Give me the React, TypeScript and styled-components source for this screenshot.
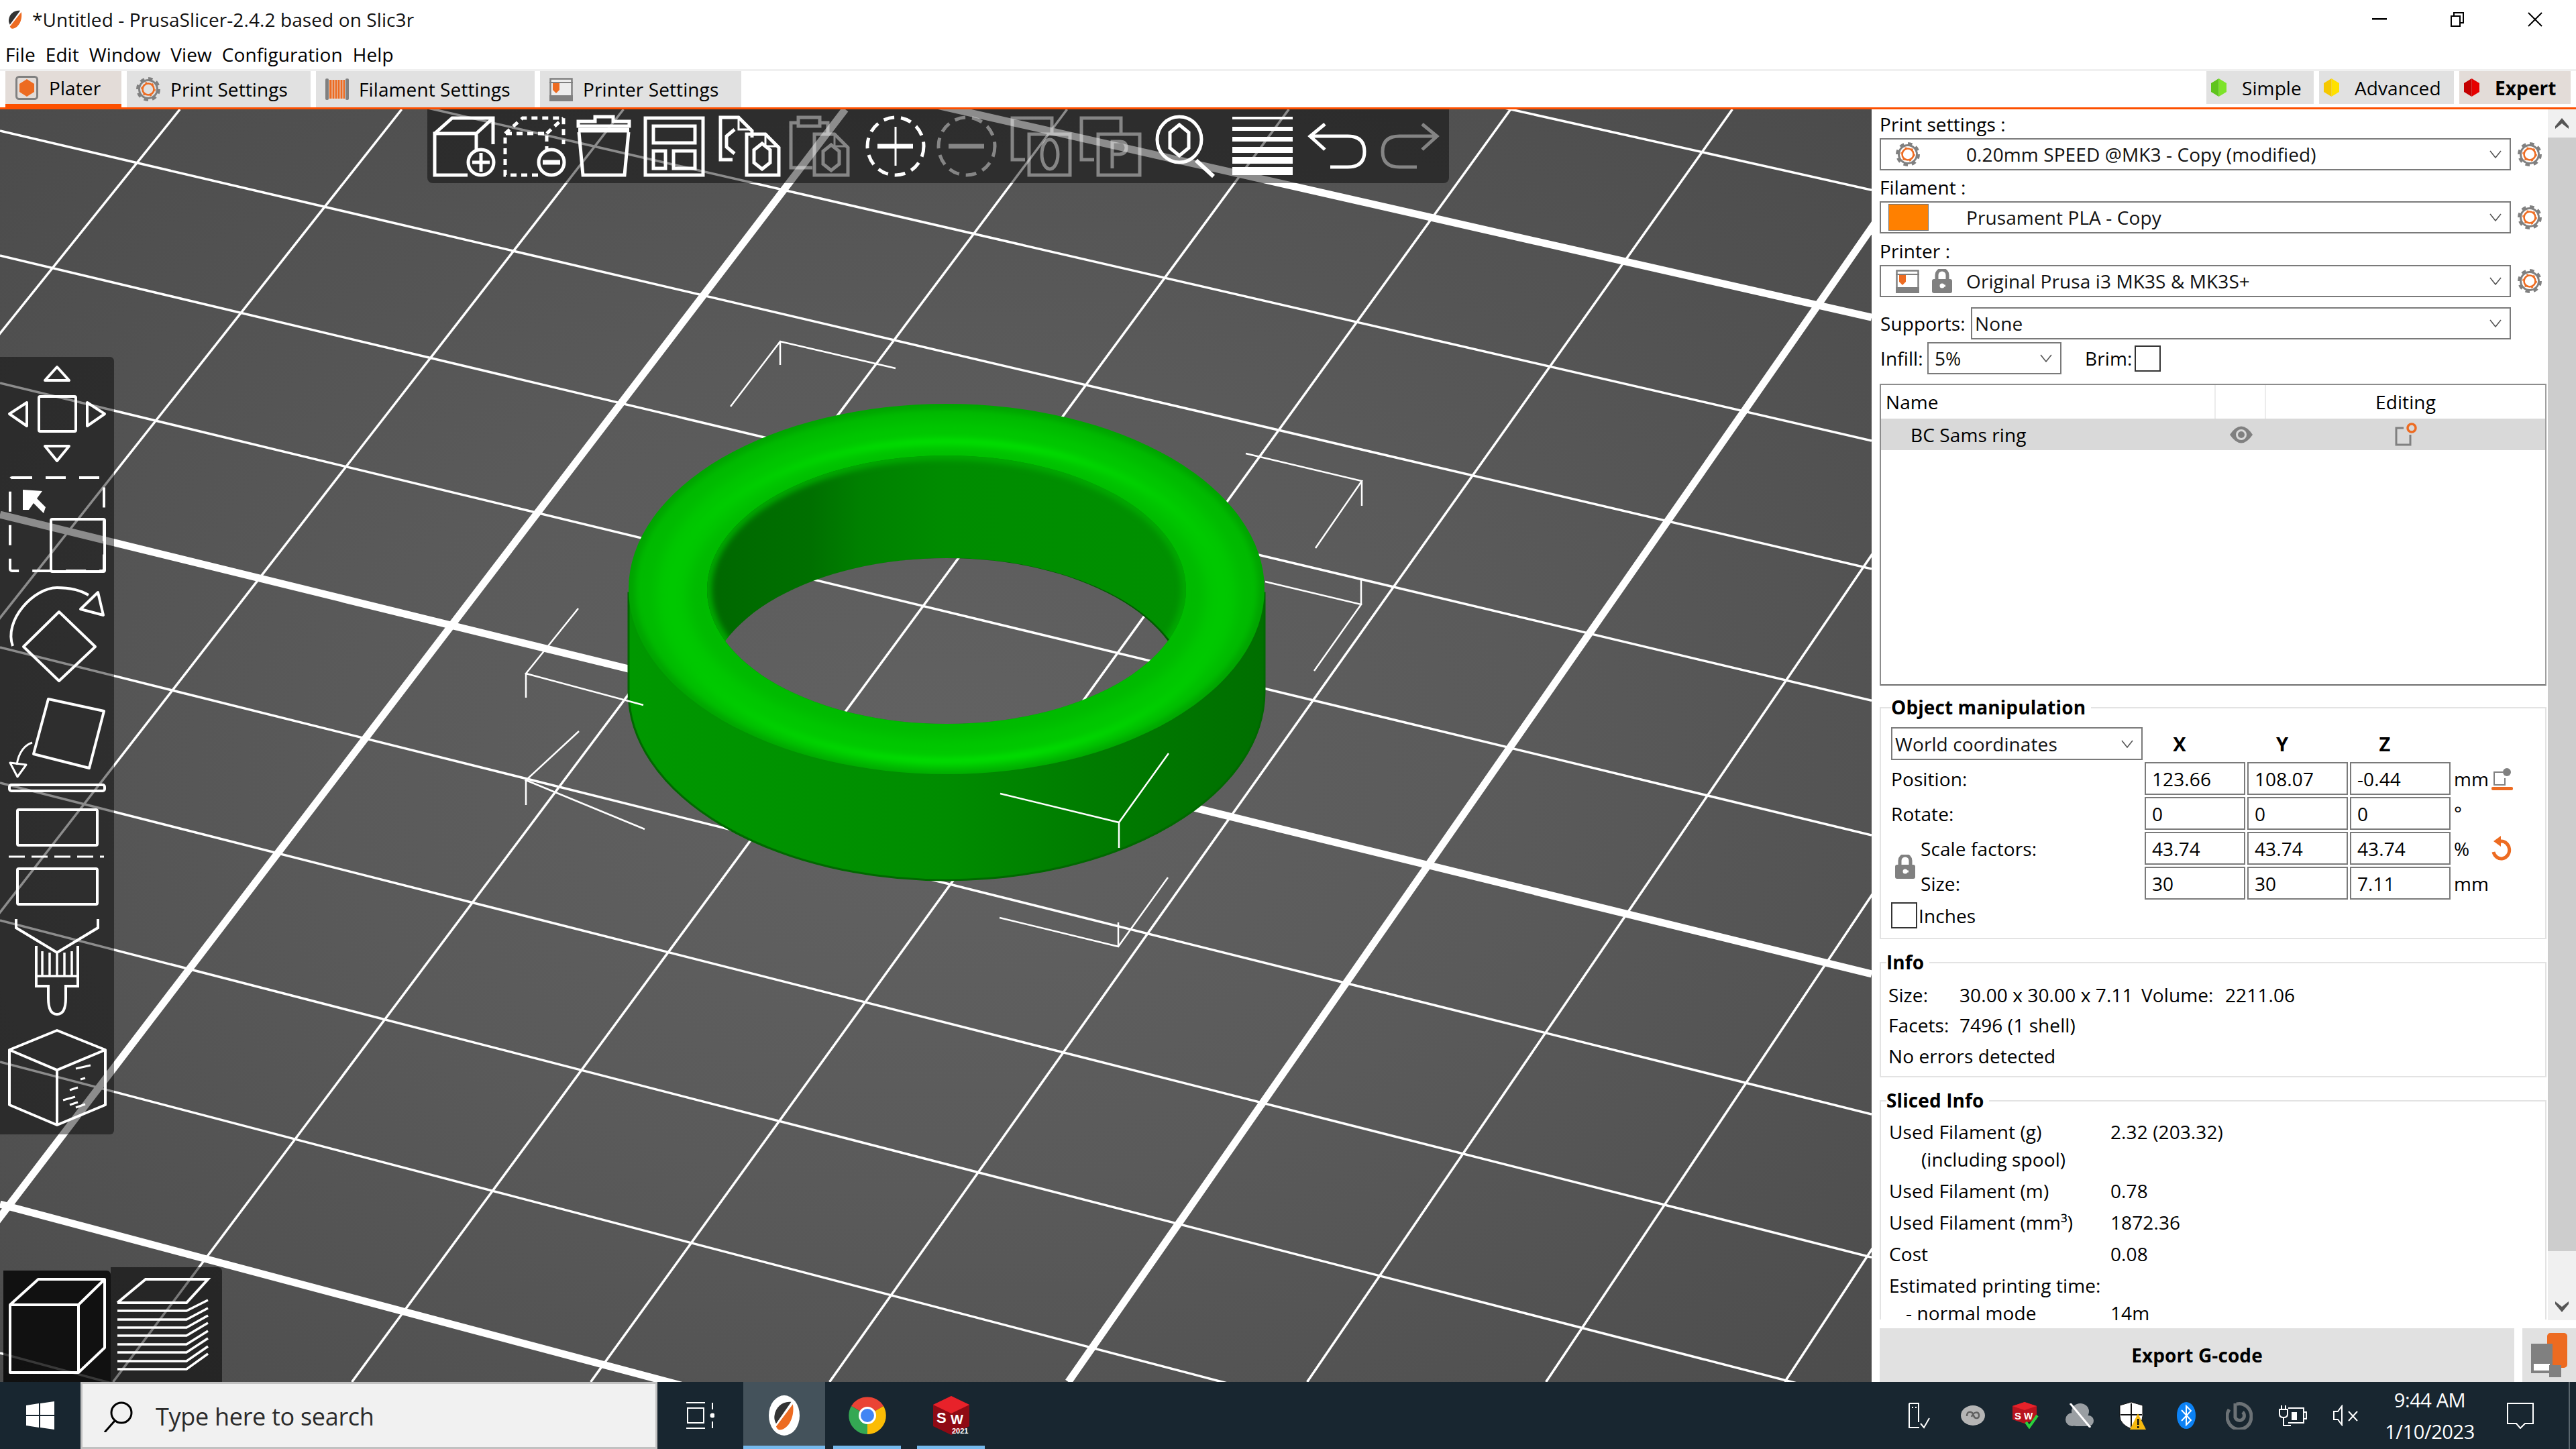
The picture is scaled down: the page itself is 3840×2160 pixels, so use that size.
import React, { FC, ReactNode } from "react";
import styled, { createGlobalStyle } from "styled-components";

const ORANGE = "#ed6b21";
const GRAY = "#808080";
const FONT = `"Open Sans", "Noto Sans", sans-serif`;

const GlobalStyle = createGlobalStyle`
  html, body {
    margin: 0;
    padding: 0;
    width: 3840px;
    height: 2160px;
    overflow: hidden;
    background: #fff;
    font-family: ${FONT};
    color: #000;
  }
  * { box-sizing: border-box; }
`;

const Page = styled.div`
  width: 3840px;
  height: 2160px;
  display: flex;
  flex-direction: column;
  font-size: 28px;
  letter-spacing: 0.1px;
`;

/* ---------- window title, menu ---------- */

const TitleBar = styled.div`
  height: 58px;
  display: flex;
  align-items: center;
  padding: 0 3px 0 12px;
`;

const TitleText = styled.div`
  flex: 1;
  margin-left: 14px;
  color: #111;
`;

const WinButton = styled.div`
  width: 116px;
  height: 58px;
  display: flex;
  align-items: center;
  justify-content: center;
`;

const MenuBar = styled.div`
  height: 45px;
  display: flex;
  align-items: center;
  gap: 15px;
  padding-left: 8px;
`;

const TabBar = styled.div`
  height: 60px;
  flex: none;
  border-top: 3px solid #f0f0f0;
  border-bottom: 3px solid #fd5000;
  display: flex;
  align-items: flex-start;
  padding: 0 8px;
  gap: 8px;
`;

const Tab = styled.div<{ $w: number; $active?: boolean }>`
  width: ${({ $w }) => $w}px;
  height: 54px;
  padding-left: ${({ $active }) => ($active ? 15 : 14)}px;
  display: flex;
  align-items: center;
  gap: ${({ $active }) => ($active ? 16 : 15)}px;
  background: ${({ $active }) => ($active ? "#e3dcd8" : "#e1e1e1")};
  border-bottom: ${({ $active }) => ($active ? "5px solid #fd5000" : "none")};
`;

const ModeTabs = styled.div`
  margin-left: auto;
  display: flex;
  gap: 8px;
`;

const ModeTab = styled.div<{ $w: number; $active?: boolean }>`
  width: ${({ $w }) => $w}px;
  height: 49px;
  padding-left: 7px;
  display: flex;
  align-items: center;
  gap: 23px;
  background: ${({ $active }) => ($active ? "#e3dcd8" : "#e1e1e1")};
  font-weight: ${({ $active }) => ($active ? 700 : 400)};
`;

/* ---------- main area ---------- */

const Main = styled.div`
  flex: 1;
  display: flex;
  min-height: 0;
`;

const Viewport = styled.div`
  position: relative;
  width: 2790px;
  height: 1897px;
  overflow: hidden;
  background: radial-gradient(ellipse at 50% 52%, #626262 0%, #5a5a5a 45%, #4b4b4b 100%);
`;

const Scene = styled.svg`
  position: absolute;
  left: 0;
  top: 0;
  width: 2790px;
  height: 1897px;
`;

const TopToolbar = styled.div`
  position: absolute;
  left: 637px;
  top: 0;
  width: 1523px;
  height: 110px;
  padding: 10px 0 0 8px;
  background: rgba(0, 0, 0, 0.45);
  border-radius: 0 0 8px 8px;
  display: grid;
  grid-template-columns: 104.5px 110.5px 98.5px 112.5px 104.5px 113.5px 105.5px 111.5px 102.5px 114.5px 113.5px 112.5px 104.5px 92px;
`;

const ToolSvg = styled.svg<{ $off?: boolean }>`
  width: 92px;
  height: 90px;
  overflow: visible;
  fill: none;
  stroke: #fff;
  stroke-width: 5px;
  opacity: ${({ $off }) => ($off ? 0.42 : 1)};
`;

const LeftToolbar = styled.div`
  position: absolute;
  left: 0;
  top: 369px;
  width: 170px;
  height: 1159px;
  padding-top: 13px;
  background: rgba(0, 0, 0, 0.45);
  border-radius: 0 6px 6px 0;
  display: flex;
  flex-direction: column;
  gap: 24px;
`;

const GizmoSvg = styled.svg`
  width: 170px;
  height: 141px;
  flex: none;
  overflow: visible;
  fill: none;
  stroke: #fff;
  stroke-width: 4px;
`;

const ViewToolbar = styled.div`
  position: absolute;
  left: 5px;
  bottom: 0;
  display: flex;
  align-items: flex-end;
`;

const ViewButton = styled.div<{ $active?: boolean }>`
  width: ${({ $active }) => ($active ? 160 : 166)}px;
  height: ${({ $active }) => ($active ? 166 : 171)}px;
  background: ${({ $active }) => ($active ? "rgba(0,0,0,0.78)" : "rgba(0,0,0,0.52)")};
  border-radius: 0 6px 0 0;
`;

const ViewSvg = styled.svg`
  width: 100%;
  height: 100%;
  fill: none;
  stroke: #fff;
  stroke-width: 4px;
`;

/* ---------- sidebar ---------- */

const Sidebar = styled.div`
  width: 1050px;
  height: 1897px;
  display: flex;
  flex-direction: column;
  background: #fff;
`;

const SideScroll = styled.div`
  height: 1805px;
  display: flex;
`;

const SideContent = styled.div`
  width: 1008px;
  height: 1805px;
  padding-left: 12px;
  padding-right: 2px;
  overflow: hidden;
`;

const ScrollBar = styled.div`
  width: 42px;
  display: flex;
  flex-direction: column;
  background: #f0f0f0;
`;

const ScrollArrow = styled.div`
  height: 42px;
  display: flex;
  align-items: center;
  justify-content: center;
`;

const ScrollEnd = styled.div`
  flex: 1;
  display: flex;
  align-items: flex-end;
  justify-content: center;
  padding-bottom: 12px;
`;

const ScrollThumb = styled.div`
  height: 1660px;
  background: #cdcdcd;
`;

const PresetLabel = styled.div<{ $h: number }>`
  height: ${({ $h }) => $h}px;
  display: flex;
  align-items: flex-end;
  line-height: 42px;
`;

const PresetRow = styled.div`
  display: flex;
  align-items: center;
  gap: 10px;
`;

const Combo = styled.div<{ $w?: number; $h?: number }>`
  width: ${({ $w }) => ($w ? `${$w}px` : "941px")};
  height: ${({ $h }) => $h ?? 48}px;
  flex: none;
  border: 2px solid #7a7a7a;
  display: flex;
  align-items: center;
  background: #fff;
  color: #111;
`;

const ComboIcons = styled.div<{ $flush?: boolean }>`
  width: 127px;
  flex: none;
  padding-left: ${({ $flush }) => ($flush ? 0 : 22)}px;
  display: flex;
  align-items: center;
  gap: 19px;
`;

const ComboText = styled.div`
  flex: 1;
  white-space: nowrap;
`;

const ComboPlain = styled(ComboText)<{ $pad?: number }>`
  padding-left: ${({ $pad }) => $pad ?? 4}px;
`;

const Chevron = styled.svg`
  width: 18px;
  height: 12px;
  margin-right: 12px;
  flex: none;
  fill: none;
  stroke: #555;
  stroke-width: 1.6px;
`;

const Swatch = styled.div`
  width: 60px;
  height: 40px;
  margin-left: 11px;
  background: #ff8000;
  border: 1px solid #777;
`;

const OptionRow = styled.div<{ $top: number }>`
  margin-top: ${({ $top }) => $top}px;
  display: flex;
  align-items: center;
  gap: 8px;
  padding-left: 1px;
`;

const OptionLabel = styled.div<{ $w: number }>`
  width: ${({ $w }) => $w}px;
  flex: none;
  white-space: nowrap;
`;

const CheckBox = styled.div`
  width: 39px;
  height: 39px;
  flex: none;
  border: 2px solid #333;
  background: #fff;
`;

const BrimLabel = styled(OptionLabel)`
  margin-left: 27px;
`;

const Table = styled.div`
  margin-top: 14px;
  height: 450px;
  border: 2px solid #8c8c8c;
  border-right-color: #a0a0a0;
  border-bottom-color: #6f6f6f;
`;

const TableHead = styled.div`
  height: 50px;
  display: grid;
  grid-template-columns: 499px 75px 1fr;
  align-items: center;
`;

const HeadCell = styled.div<{ $center?: boolean }>`
  height: 100%;
  display: flex;
  align-items: center;
  justify-content: ${({ $center }) => ($center ? "center" : "flex-start")};
  padding-left: ${({ $center }) => ($center ? 0 : 7)}px;
  border-right: 2px solid #ececec;
  &:last-child { border-right: none; }
`;

const TableRow = styled.div`
  height: 47px;
  background: #d9d9d9;
  display: grid;
  grid-template-columns: 499px 75px 1fr;
  align-items: center;
`;

const RowName = styled.div`
  padding-left: 44px;
`;

const RowIcon = styled.div`
  display: flex;
  justify-content: center;
`;

const Group = styled.div<{ $top: number; $h?: number; $pad: number }>`
  position: relative;
  margin-top: ${({ $top }) => $top}px;
  height: ${({ $h }) => ($h ? `${$h}px` : "auto")};
  border: 2px solid #e3e3e3;
  border-bottom-width: ${({ $h }) => ($h ? 2 : 0)}px;
  padding-top: ${({ $pad }) => $pad}px;
`;

const GroupTitle = styled.div<{ $left: number }>`
  position: absolute;
  top: -20px;
  left: ${({ $left }) => $left}px;
  padding: 0 8px 0 0;
  background: #fff;
  font-weight: 700;
  line-height: 36px;
`;

const ManipGrid = styled.div`
  display: grid;
  padding-left: 15px;
  grid-template-columns: 41px 331px 150px 150px 150px 130px;
  grid-auto-rows: 49px;
  gap: 3px;
  align-items: center;
`;

const ManipCombo = styled(Combo)`
  grid-column: 1 / span 2;
  width: 375px;
  height: 49px;
`;

const AxisHead = styled.div`
  font-weight: 700;
  font-size: 29px;
  text-align: center;
  padding-right: 46px;
`;

const ManipLabel = styled.div<{ $sub?: boolean }>`
  grid-column: ${({ $sub }) => ($sub ? "2" : "1 / span 2")};
`;

const LockCell = styled.div`
  grid-column: 1;
  grid-row: span 2;
  display: flex;
  justify-content: center;
  padding-top: 2px;
`;

const Field = styled.div`
  height: 49px;
  border: 2px solid #7a7a7a;
  padding-left: 9px;
  display: flex;
  align-items: center;
  background: #fff;
`;

const UnitCell = styled.div`
  display: flex;
  align-items: center;
  gap: 2px;
  padding-left: 2px;
`;

const UnitText = styled.div<{ $raised?: boolean }>`
  width: 54px;
  align-self: ${({ $raised }) => ($raised ? "flex-start" : "center")};
  margin-top: ${({ $raised }) => ($raised ? -2 : 0)}px;
`;

const InchesRow = styled.div`
  margin-top: 4px;
  padding-left: 15px;
  display: flex;
  align-items: center;
  gap: 2px;
`;

const InfoLine = styled.div`
  height: 46.5px;
  padding-left: 11px;
  display: flex;
  align-items: center;
  margin-top: -0.7px;
`;

const InfoCell = styled.div<{ $w: number }>`
  width: ${({ $w }) => $w}px;
  flex: none;
  white-space: nowrap;
`;

const SlicedRow = styled.div<{ $tight?: boolean; $last?: boolean }>`
  display: grid;
  grid-template-columns: 330px 1fr;
  padding-left: 12px;
  line-height: ${({ $last }) => ($last ? 20 : 41)}px;
  margin-top: ${({ $tight, $last }) => ($last ? 10 : $tight ? 0 : 6)}px;
`;

const Indented = styled.div<{ $pad: number }>`
  padding-left: ${({ $pad }) => $pad}px;
`;

const ExportRow = styled.div`
  margin-top: 12px;
  height: 80px;
  display: flex;
  padding-left: 12px;
  gap: 12px;
`;

const ExportButton = styled.div`
  width: 946px;
  background: #e1e1e1;
  display: flex;
  align-items: center;
  justify-content: center;
  font-weight: 700;
`;

const RemoveButton = styled.div`
  flex: 1;
  background: #e1e1e1;
  display: flex;
  align-items: center;
  justify-content: center;
`;

/* ---------- taskbar ---------- */

const TaskBar = styled.div`
  height: 100px;
  flex: none;
  display: flex;
  align-items: stretch;
  background: #182630;
  letter-spacing: 0;
`;

const StartButton = styled.div`
  width: 120px;
  display: flex;
  align-items: center;
  justify-content: center;
`;

const SearchBox = styled.div`
  width: 860px;
  border: solid #c1c1c1;
  border-width: 3px;
  background: #f1f1f1;
  padding: 3px 0 0 30px;
  display: flex;
  align-items: center;
  gap: 33px;
  color: #2b2b2b;
  font-size: 36px;
  letter-spacing: -0.3px;
`;

const TaskCell = styled.div<{ $w: number; $active?: boolean; $line?: boolean }>`
  position: relative;
  width: ${({ $w }) => $w}px;
  display: flex;
  align-items: center;
  justify-content: center;
  background: ${({ $active }) => ($active ? "#44525b" : "transparent")};
  &::after {
    content: "";
    display: ${({ $line }) => ($line ? "block" : "none")};
    position: absolute;
    bottom: 0;
    left: ${({ $active }) => ($active ? 0 : 12)}px;
    right: ${({ $active }) => ($active ? 0 : 12)}px;
    height: 5px;
    background: #76b9ed;
  }
`;

const Tray = styled.div`
  margin-left: auto;
  display: flex;
  align-items: stretch;
`;

const TrayCell = styled.div`
  width: 79.5px;
  display: flex;
  align-items: center;
  justify-content: center;
`;

const Clock = styled.div`
  width: 170px;
  color: #fff;
  font-size: 29px;
  letter-spacing: -0.4px;
  display: flex;
  flex-direction: column;
  align-items: center;
  justify-content: center;
  gap: 11px;
  line-height: 36px;
`;

const NotifyCell = styled.div`
  width: 100px;
  display: flex;
  align-items: center;
  justify-content: center;
`;

const ShowDesktop = styled.div`
  width: 33px;
  border-right: 9px solid transparent;
  position: relative;
  &::after {
    content: "";
    position: absolute;
    right: 0;
    top: 0;
    bottom: 0;
    width: 2px;
    background: #5a666d;
  }
`;

/* ---------- small drawings ---------- */

const Gear: FC<{ size?: number }> = ({ size = 36 }) => (
  <svg width={size} height={size} viewBox="0 0 36 36" fill="none" style={{ flex: "none" }}>
    <circle cx="18" cy="18" r="16" stroke={GRAY} strokeWidth="4" strokeDasharray="6.5 6" />
    <circle cx="18" cy="18" r="13.5" stroke={GRAY} strokeWidth="3" />
    <circle cx="18" cy="18" r="8.5" stroke={ORANGE} strokeWidth="2.6" />
    <circle cx="18" cy="18" r="10.2" stroke={ORANGE} strokeWidth="1.4" strokeDasharray="3 7.7" />
  </svg>
);

const Down: FC = () => (
  <Chevron viewBox="0 0 18 12">
    <polyline points="1,1 9,11 17,1" />
  </Chevron>
);

const Hex: FC<{ light: string; dark: string }> = ({ light, dark }) => (
  <svg width="23" height="27" viewBox="0 0 23 27" style={{ flex: "none" }}>
    <polygon points="11.5,0 23,7 23,20 11.5,27" fill={light} />
    <polygon points="11.5,0 0,7 0,20 11.5,27" fill={dark} />
  </svg>
);

const PlaterIcon: FC = () => (
  <svg width="34" height="36" viewBox="0 0 34 36" fill="none" style={{ flex: "none" }}>
    <rect x="1.5" y="1.5" width="31" height="33" rx="4" stroke={GRAY} strokeWidth="3" />
    <polygon points="17,5 28,12 28,24 17,31 6,24 6,12" fill={ORANGE} />
  </svg>
);

const SpoolIcon: FC = () => (
  <svg width="35" height="36" viewBox="0 0 35 36" fill="none" style={{ flex: "none" }}>
    <rect x="0" y="2" width="5" height="32" rx="2" fill={GRAY} />
    <rect x="30" y="2" width="5" height="32" rx="2" fill={GRAY} />
    <rect x="6" y="4" width="23" height="28" fill={ORANGE} />
    {[10, 14, 18, 22, 26].map((x) => (
      <line key={x} x1={x} y1="4" x2={x} y2="32" stroke="#e1e1e1" strokeWidth="1" />
    ))}
  </svg>
);

const PrinterIcon: FC = () => (
  <svg width="35" height="35" viewBox="0 0 35 35" fill="none" style={{ flex: "none" }}>
    <rect x="1.5" y="1.5" width="32" height="32" stroke={GRAY} strokeWidth="2.5" fill="#fff" fillOpacity="0.4" />
    <rect x="0" y="26" width="35" height="9" fill={GRAY} />
    <line x1="0" y1="7" x2="35" y2="7" stroke={GRAY} strokeWidth="2" />
    <polygon points="5,8 15,8 15,18 10,23 5,18" fill={ORANGE} />
  </svg>
);

const Lock: FC = () => (
  <svg width="30" height="36" viewBox="0 0 30 36" fill="none" style={{ flex: "none" }}>
    <path d="M7 17V9a8 8 0 0 1 16 0v8" stroke={GRAY} strokeWidth="5" />
    <rect x="0" y="15" width="30" height="21" rx="3" fill={GRAY} />
    <circle cx="15" cy="25" r="3.5" fill="#fff" />
    <rect x="15" y="23.5" width="5" height="3" fill="#fff" />
  </svg>
);

const PrusaMark: FC<{ w: number; h: number; ring?: boolean }> = ({ w, h, ring }) => (
  <svg width={w} height={h} viewBox="0 0 40 52" style={{ flex: "none" }}>
    {ring && <ellipse cx="20" cy="26" rx="20" ry="26" fill="#fff" />}
    <g transform={ring ? "translate(6 7) scale(.7 .74)" : undefined}>
      <path d="M33 2 C18 0 4 10 2 26 C1 32 3 36 5 40 Z" fill="#333" />
      <path d="M36 6 C40 28 28 50 12 51 C8 51 6 47 5 45 Z" fill={ORANGE} />
    </g>
  </svg>
);

/* ---------- top toolbar icons ---------- */

const HexMark: FC<{ cx: number; cy: number; rx: number; ry: number }> = ({ cx, cy, rx, ry }) => (
  <polygon
    points={`${cx},${cy - ry} ${cx + rx},${cy - ry / 2} ${cx + rx},${cy + ry / 2} ${cx},${cy + ry} ${cx - rx},${cy + ry / 2} ${cx - rx},${cy - ry / 2}`}
  />
);

const topIcons: { off?: boolean; node: ReactNode }[] = [
  {
    node: (
      <>
        <path d="M52 88H3V26H65V50M3 26L29 3H90V42M65 26L90 3" />
        <circle cx="72" cy="69" r="19" />
        <path d="M72 55V83M59 69H85" />
      </>
    ),
  },
  {
    node: (
      <>
        <path d="M52 88H3V26H65V50M3 26L29 3H90V42M65 26L90 3" strokeDasharray="9 7" />
        <circle cx="72" cy="69" r="19" />
        <path d="M59 69H85" strokeWidth="7" />
      </>
    ),
  },
  {
    node: (
      <>
        <path d="M2 8H27V1H54V8H78V15H2Z" />
        <path d="M2 21H78" strokeWidth="7" />
        <path d="M3 24L9 88H71L77 24" />
      </>
    ),
  },
  {
    node: (
      <>
        <rect x="3" y="3" width="86" height="85" />
        <rect x="15" y="15" width="62" height="25" strokeWidth="5" />
        <rect x="15" y="52" width="18" height="26" />
        <rect x="45" y="52" width="32" height="26" />
      </>
    ),
  },
  {
    node: (
      <>
        <path d="M21 65H3V2H30L50 22V32" />
        <path d="M30 2V20H50" strokeWidth="3" />
        <path d="M24 20L12 30V46L24 56" />
        <path d="M42 88V27H70L90 47V88Z" />
        <path d="M70 27V45H90" strokeWidth="3" />
        <HexMark cx={65} cy={60} rx={12} ry={19} />
      </>
    ),
  },
  {
    off: true,
    node: (
      <>
        <path d="M35 77H3V10H14M46 10H58V25" />
        <rect x="14" y="2" width="32" height="13" />
        <path d="M38 88V27H68L88 47V88Z" />
        <path d="M68 27V45H88" strokeWidth="3" />
        <HexMark cx={63} cy={62} rx={12} ry={19} />
      </>
    ),
  },
  {
    node: (
      <>
        <ellipse cx="46" cy="45" rx="42" ry="43" strokeDasharray="16 10" />
        <path d="M46 16V74" strokeWidth="3" />
        <path d="M19 45H72" strokeWidth="7" />
      </>
    ),
  },
  {
    off: true,
    node: (
      <>
        <ellipse cx="46" cy="45" rx="42" ry="43" strokeDasharray="16 10" />
        <path d="M19 45H72" strokeWidth="7" />
      </>
    ),
  },
  {
    off: true,
    node: (
      <>
        <path d="M22 65H3V3H62V25" />
        <rect x="28" y="27" width="61" height="61" />
        <ellipse cx="59" cy="57" rx="12" ry="22" />
      </>
    ),
  },
  {
    off: true,
    node: (
      <>
        <path d="M22 65H3V3H62V25" />
        <rect x="28" y="27" width="62" height="61" />
        <path d="M49 78V38H60Q70 38 70 47T60 57H49" />
      </>
    ),
  },
  {
    node: (
      <>
        <ellipse cx="35" cy="35" rx="33" ry="34" />
        <HexMark cx={35} cy={36} rx={14} ry={23} />
        <path d="M60 66L86 90" strokeWidth="6" />
      </>
    ),
  },
  {
    node: (
      <g stroke="none" fill="#fff">
        <rect x="0" y="1" width="90" height="4" />
        <rect x="0" y="16" width="90" height="6" />
        <rect x="0" y="31" width="90" height="7" />
        <rect x="0" y="46" width="90" height="9" />
        <rect x="0" y="61" width="90" height="10" />
        <rect x="0" y="76" width="90" height="12" />
      </g>
    ),
  },
  {
    node: <path d="M26 12L4 30L26 50M4 30H60Q85 30 85 53T60 76H34" />,
  },
  {
    off: true,
    node: <path d="M66 12L88 30L66 50M88 30H32Q7 30 7 53T32 76H58" />,
  },
];

/* ---------- left toolbar icons ---------- */

const gizmos: ReactNode[] = [
  <>
    <polygon points="85,2 103,22 67,22" strokeLinejoin="round" />
    <polygon points="14,72 40,55 40,90" strokeLinejoin="round" />
    <rect x="58" y="46" width="55" height="52" rx="2" />
    <polygon points="156,72 130,55 130,90" strokeLinejoin="round" />
    <polygon points="85,142 103,120 67,120" strokeLinejoin="round" />
  </>,
  <>
    <rect x="15" y="2" width="140" height="139" rx="3" strokeDasharray="30 20" />
    <polygon points="34,20 63,22 55,33 68,46 65,55 50,40 43,50 34,50" fill="#fff" stroke="none" />
    <rect x="76" y="64" width="80" height="78" rx="2" />
  </>,
  <>
    <path d="M19 88C5 50 50 1 85 1C105 1 120 5 132 12" />
    <polygon points="120,33 146,8 154,42" strokeLinejoin="round" />
    <polygon points="35,89 88,37 142,89 88,140" strokeLinejoin="round" />
  </>,
  <>
    <polygon points="72,2 155,20 133,105 50,84" strokeLinejoin="round" />
    <path d="M48 67C38 70 28 80 25 100" strokeWidth="3" />
    <polygon points="15,97 39,100 26,118" strokeLinejoin="round" strokeWidth="3" />
    <rect x="14" y="130" width="142" height="9" rx="3" />
  </>,
  <>
    <rect x="26" y="2" width="119" height="53" rx="2" />
    <path d="M13 72H155" strokeDasharray="24 10" strokeWidth="3" />
    <rect x="26" y="90" width="119" height="53" rx="2" />
  </>,
  <>
    <path d="M24 0V13L85 50L146 13V0" />
    <path d="M54 40V100H72V118Q72 142 85 142Q98 142 98 118V100H116V40" />
    <path d="M54 85H116M63 48V85M74 50V85M85 50V85M96 50V85M107 48V85" strokeWidth="3.5" />
  </>,
  <>
    <path d="M14 30L85 1L157 30V112L85 142L14 112Z" strokeLinejoin="round" />
    <path d="M14 30L85 60L157 30M85 60V142" />
    <path d="M113 58L135 53M120 74L127 72M104 90L116 86M94 105L112 100M104 112L116 108M113 116L127 111" strokeWidth="3" />
  </>,
];

/* ---------- 3D scene ---------- */

const family1 = Array.from({ length: 13 }, (_, i) => {
  const k = i - 3;
  const t = 1260 + 330.6 * k;
  const m = -0.763 + (t - 1260) * 0.0000405;
  return { key: k, t, m, thick: k % 5 === 0 };
});

const family2 = [
  { y0: -340, thick: false },
  { y0: -160, thick: true },
  { y0: 14, thick: false },
  { y0: 195, thick: false },
  { y0: 381, thick: false },
  { y0: 571, thick: false },
  { y0: 767, thick: true },
  { y0: 965, thick: false },
  { y0: 1167, thick: false },
  { y0: 1372, thick: false },
  { y0: 1583, thick: false },
  { y0: 1795, thick: true },
  { y0: 2017, thick: false },
];

const bedMarks = [
  "M1335 549L1163 509L1089 606M1163 509V544",
  "M1857 676L2030 717L1961 817M2030 717V754",
  "M1886 867L2029 901L1959 1000M2029 901V865",
  "M862 907L784 1004L959 1051M784 1004V1040",
  "M863 1090L784 1163L961 1236M784 1163V1200",
  "M1491 1183L1668 1226L1742 1123M1668 1226V1264",
  "M1490 1368L1667 1411L1741 1308M1667 1411V1375",
];

const SceneView: FC = () => (
  <Scene viewBox="0 163 2790 1897">
    <defs>
      <linearGradient id="sideShade" x1="937" x2="1885" y1="0" y2="0" gradientUnits="userSpaceOnUse">
        <stop offset="0" stopColor="#009800" />
        <stop offset="0.5" stopColor="#008c00" />
        <stop offset="0.72" stopColor="#007c00" />
        <stop offset="1" stopColor="#006f00" />
      </linearGradient>
      <linearGradient id="wallShade" x1="1053" x2="1766" y1="0" y2="0" gradientUnits="userSpaceOnUse">
        <stop offset="0" stopColor="#006800" />
        <stop offset="0.22" stopColor="#007000" />
        <stop offset="0.32" stopColor="#008000" />
        <stop offset="0.5" stopColor="#008c00" />
        <stop offset="1" stopColor="#009000" />
      </linearGradient>
      <linearGradient id="glint" x1="937" x2="1885" y1="0" y2="0" gradientUnits="userSpaceOnUse">
        <stop offset="0.1" stopColor="#00e000" stopOpacity="0" />
        <stop offset="0.45" stopColor="#00e000" />
        <stop offset="0.62" stopColor="#00e000" />
        <stop offset="0.92" stopColor="#00e000" stopOpacity="0" />
      </linearGradient>
      <filter id="soft" x="-20%" y="-20%" width="140%" height="140%">
        <feGaussianBlur stdDeviation="9" />
      </filter>
      <filter id="softer" x="-20%" y="-20%" width="140%" height="140%">
        <feGaussianBlur stdDeviation="4" />
      </filter>
      <clipPath id="innerClip">
        <ellipse cx="1411" cy="879" rx="357" ry="200" />
      </clipPath>
      <clipPath id="topClip">
        <ellipse cx="1411" cy="878" rx="474" ry="276" />
      </clipPath>
      <mask id="holeMask" maskUnits="userSpaceOnUse" x="0" y="163" width="2790" height="1897">
        <rect x="0" y="163" width="2790" height="1897" fill="#fff" />
        <g clipPath="url(#innerClip)">
          <ellipse cx="1411" cy="1032" rx="357" ry="200" fill="#000" />
        </g>
      </mask>
    </defs>
    <g stroke="#fff" fill="none">
      {family1.map(({ key, t, m, thick }) => (
        <line key={key} x1={t} y1={163} x2={t + m * 1897} y2={2060} strokeWidth={thick ? 11 : 3.5} />
      ))}
      {family2.map(({ y0, thick }) => {
        const s = 0.2455 + (y0 - 767) * 0.00002;
        return <line key={y0} x1={0} y1={y0} x2={2790} y2={y0 + s * 2790} strokeWidth={thick ? 11 : 3.5} />;
      })}
    </g>
    <g mask="url(#holeMask)">
      <path d="M937 884V1031A474 281 0 0 0 1885 1031V884Z" fill="url(#sideShade)" stroke="#006800" strokeWidth="3" />
      <ellipse cx="1411" cy="878" rx="474" ry="276" fill="#00a400" />
      <g clipPath="url(#topClip)">
        <ellipse cx="1411" cy="878" rx="464" ry="268" fill="#00ba00" filter="url(#softer)" />
        <ellipse cx="1411" cy="888" rx="410" ry="236" fill="none" stroke="#00c800" strokeWidth="46" filter="url(#soft)" />
        <ellipse cx="1411" cy="896" rx="414" ry="238" fill="none" stroke="url(#glint)" strokeWidth="10" filter="url(#softer)" />
      </g>
      <ellipse cx="1411" cy="879" rx="357" ry="200" fill="url(#wallShade)" />
      <g clipPath="url(#innerClip)">
        <ellipse cx="1411" cy="879" rx="357" ry="200" fill="none" stroke="#00a800" strokeWidth="14" filter="url(#softer)" />
      </g>
      <path d="M1086 955A357 200 0 0 1 1741 955A357 200 0 0 0 1086 955Z" fill="none" stroke="#005c00" strokeWidth="5" />
    </g>
    <g stroke="#fff" fill="none" strokeWidth="2.5">
      {bedMarks.map((d) => (
        <path key={d} d={d} />
      ))}
    </g>
  </Scene>
);

/* ---------- tray drawings ---------- */

const TrayIcon: FC<{ children: ReactNode; w?: number; h?: number; box?: string }> = ({
  children,
  w = 46,
  h = 46,
  box = "0 0 46 46",
}) => (
  <svg width={w} height={h} viewBox={box} fill="none" stroke="#fff" strokeWidth="2">
    {children}
  </svg>
);

const App: FC = () => (
  <Page>
    <GlobalStyle />
    <TitleBar>
      <PrusaMark w={22} h={30} />
      <TitleText>*Untitled - PrusaSlicer-2.4.2 based on Slic3r</TitleText>
      <WinButton>
        <svg width="22" height="4" viewBox="0 0 22 4"><rect width="22" height="2.5" fill="#000" /></svg>
      </WinButton>
      <WinButton>
        <svg width="20" height="22" viewBox="0 0 20 22" fill="none" stroke="#000" strokeWidth="2">
          <rect x="1" y="6" width="13" height="15" />
          <path d="M5 5V1H19V16H15" />
        </svg>
      </WinButton>
      <WinButton>
        <svg width="22" height="22" viewBox="0 0 22 22" fill="none" stroke="#000" strokeWidth="2">
          <path d="M1 1L21 21M21 1L1 21" />
        </svg>
      </WinButton>
    </TitleBar>
    <MenuBar>
      {["File", "Edit", "Window", "View", "Configuration", "Help"].map((m) => (
        <div key={m}>{m}</div>
      ))}
    </MenuBar>
    <TabBar>
      <Tab $w={173} $active>
        <PlaterIcon />
        Plater
      </Tab>
      <Tab $w={274}>
        <Gear />
        Print Settings
      </Tab>
      <Tab $w={326}>
        <SpoolIcon />
        Filament Settings
      </Tab>
      <Tab $w={300}>
        <PrinterIcon />
        Printer Settings
      </Tab>
      <ModeTabs>
        <ModeTab $w={160}>
          <Hex light="#7de32a" dark="#5fc41d" />
          Simple
        </ModeTab>
        <ModeTab $w={201}>
          <Hex light="#ffe100" dark="#f5c800" />
          Advanced
        </ModeTab>
        <ModeTab $w={166} $active>
          <Hex light="#e60000" dark="#c40000" />
          Expert
        </ModeTab>
      </ModeTabs>
    </TabBar>
    <Main>
      <Viewport>
        <SceneView />
        <TopToolbar>
          {topIcons.map((icon, i) => (
            <ToolSvg key={i} viewBox="0 0 92 90" $off={icon.off}>
              {icon.node}
            </ToolSvg>
          ))}
        </TopToolbar>
        <LeftToolbar>
          {gizmos.map((g, i) => (
            <GizmoSvg key={i} viewBox="0 0 170 141">
              {g}
            </GizmoSvg>
          ))}
        </LeftToolbar>
        <ViewToolbar>
          <ViewButton $active>
            <ViewSvg viewBox="0 0 160 166">
              <path d="M10 51V152H112V51H10ZM10 51L52 13H151V115L112 152M112 51L151 13" strokeLinejoin="round" />
            </ViewSvg>
          </ViewButton>
          <ViewButton>
            <ViewSvg viewBox="0 0 166 171">
              <path d="M10 53L52 18H145L113 53H10" />
              {[65, 78, 90, 102, 115, 127, 140, 152].map((y, i) => (
                <path key={y} d={`M10 ${y}H113L145 ${y - 16 - i}`} strokeWidth="3.5" />
              ))}
            </ViewSvg>
          </ViewButton>
        </ViewToolbar>
      </Viewport>
      <Sidebar>
        <SideScroll>
          <SideContent>
            <PresetLabel $h={43}>Print settings :</PresetLabel>
            <PresetRow>
              <Combo>
                <ComboIcons>
                  <Gear />
                </ComboIcons>
                <ComboText>0.20mm SPEED @MK3 - Copy (modified)</ComboText>
                <Down />
              </Combo>
              <Gear />
            </PresetRow>
            <PresetLabel $h={46}>Filament :</PresetLabel>
            <PresetRow>
              <Combo>
                <ComboIcons $flush>
                  <Swatch />
                </ComboIcons>
                <ComboText>Prusament PLA - Copy</ComboText>
                <Down />
              </Combo>
              <Gear />
            </PresetRow>
            <PresetLabel $h={47}>Printer :</PresetLabel>
            <PresetRow>
              <Combo>
                <ComboIcons>
                  <PrinterIcon />
                  <Lock />
                </ComboIcons>
                <ComboText>Original Prusa i3 MK3S &amp; MK3S+</ComboText>
                <Down />
              </Combo>
              <Gear />
            </PresetRow>
            <OptionRow $top={15}>
              <OptionLabel $w={127}>Supports:</OptionLabel>
              <Combo $w={805}>
                <ComboPlain>None</ComboPlain>
                <Down />
              </Combo>
            </OptionRow>
            <OptionRow $top={4}>
              <OptionLabel $w={62}>Infill:</OptionLabel>
              <Combo $w={200}>
                <ComboPlain $pad={9}>5%</ComboPlain>
                <Down />
              </Combo>
              <BrimLabel $w={66}>Brim:</BrimLabel>
              <CheckBox />
            </OptionRow>
            <Table>
              <TableHead>
                <HeadCell>Name</HeadCell>
                <HeadCell />
                <HeadCell $center>Editing</HeadCell>
              </TableHead>
              <TableRow>
                <RowName>BC Sams ring</RowName>
                <RowIcon>
                  <svg width="36" height="26" viewBox="0 0 36 26" fill="none">
                    <path d="M1 13Q18 -12 35 13Q18 38 1 13Z" fill={GRAY} />
                    <circle cx="18" cy="13" r="8" fill="#d9d9d9" />
                    <circle cx="18" cy="13" r="5" fill={GRAY} />
                  </svg>
                </RowIcon>
                <RowIcon>
                  <svg width="34" height="36" viewBox="0 0 34 36" fill="none">
                    <path d="M14 8H3V33H24V18" stroke={GRAY} strokeWidth="3" />
                    <circle cx="26" cy="8" r="6" stroke={ORANGE} strokeWidth="3.5" />
                  </svg>
                </RowIcon>
              </TableRow>
            </Table>
            <Group $top={32} $h={346} $pad={28}>
              <GroupTitle $left={15}>Object manipulation</GroupTitle>
              <ManipGrid>
                <ManipCombo>
                  <ComboPlain>World coordinates</ComboPlain>
                  <Down />
                </ManipCombo>
                <AxisHead>X</AxisHead>
                <AxisHead>Y</AxisHead>
                <AxisHead>Z</AxisHead>
                <div />
                <ManipLabel>Position:</ManipLabel>
                <Field>123.66</Field>
                <Field>108.07</Field>
                <Field>-0.44</Field>
                <UnitCell>
                  <UnitText>mm</UnitText>
                  <svg width="32" height="34" viewBox="0 0 32 34" fill="none">
                    <path d="M17 7H4V26H20V16" stroke={GRAY} strokeWidth="2" />
                    <circle cx="23" cy="7" r="6" fill={GRAY} />
                    <rect x="0" y="29" width="32" height="5" rx="2" fill={ORANGE} />
                  </svg>
                </UnitCell>
                <ManipLabel>Rotate:</ManipLabel>
                <Field>0</Field>
                <Field>0</Field>
                <Field>0</Field>
                <UnitCell>
                  <UnitText $raised>°</UnitText>
                </UnitCell>
                <LockCell>
                  <Lock />
                </LockCell>
                <ManipLabel $sub>Scale factors:</ManipLabel>
                <Field>43.74</Field>
                <Field>43.74</Field>
                <Field>43.74</Field>
                <UnitCell>
                  <UnitText>%</UnitText>
                  <svg width="32" height="38" viewBox="0 0 32 38" fill="none">
                    <path d="M12 8H14A12 13 0 1 1 3 24" stroke={ORANGE} strokeWidth="5" />
                    <polygon points="14,0 14,16 3,8" fill={ORANGE} />
                  </svg>
                </UnitCell>
                <ManipLabel $sub>Size:</ManipLabel>
                <Field>30</Field>
                <Field>30</Field>
                <Field>7.11</Field>
                <UnitCell>
                  <UnitText>mm</UnitText>
                </UnitCell>
              </ManipGrid>
              <InchesRow>
                <CheckBox />
                Inches
              </InchesRow>
            </Group>
            <Group $top={34} $h={172} $pad={24}>
              <GroupTitle $left={8}>Info</GroupTitle>
              <InfoLine>
                <InfoCell $w={106}>Size:</InfoCell>
                <InfoCell $w={271}>30.00 x 30.00 x 7.11</InfoCell>
                <InfoCell $w={125}>Volume:</InfoCell>
                <InfoCell $w={120}>2211.06</InfoCell>
              </InfoLine>
              <InfoLine>
                <InfoCell $w={106}>Facets:</InfoCell>
                <InfoCell $w={300}>7496 (1 shell)</InfoCell>
              </InfoLine>
              <InfoLine>No errors detected</InfoLine>
            </Group>
            <Group $top={34} $pad={19}>
              <GroupTitle $left={8}>Sliced Info</GroupTitle>
              <SlicedRow>
                <div>Used Filament (g)</div>
                <div>2.32 (203.32)</div>
              </SlicedRow>
              <SlicedRow $tight>
                <Indented $pad={48}>(including spool)</Indented>
              </SlicedRow>
              <SlicedRow>
                <div>Used Filament (m)</div>
                <div>0.78</div>
              </SlicedRow>
              <SlicedRow>
                <div>Used Filament (mm³)</div>
                <div>1872.36</div>
              </SlicedRow>
              <SlicedRow>
                <div>Cost</div>
                <div>0.08</div>
              </SlicedRow>
              <SlicedRow>
                <div>Estimated printing time:</div>
              </SlicedRow>
              <SlicedRow $last>
                <Indented $pad={25}>- normal mode</Indented>
                <div>14m</div>
              </SlicedRow>
            </Group>
          </SideContent>
          <ScrollBar>
            <ScrollArrow>
              <svg width="20" height="16" viewBox="0 0 20 16" fill="#555"><path d="M10 0L20 12V16L10 8L0 16V12Z" /></svg>
            </ScrollArrow>
            <ScrollThumb />
            <ScrollEnd>
              <svg width="20" height="16" viewBox="0 0 20 16" fill="#555"><path d="M10 16L20 4V0L10 8L0 0V4Z" /></svg>
            </ScrollEnd>
          </ScrollBar>
        </SideScroll>
        <ExportRow>
          <ExportButton>Export G-code</ExportButton>
          <RemoveButton>
            <svg width="54" height="66" viewBox="0 0 54 66" fill="none">
              <rect x="24" y="0" width="30" height="52" rx="5" fill={ORANGE} />
              <rect x="0" y="16" width="32" height="44" fill={GRAY} />
              <path d="M4 46H28V56H4Z" fill="#fff" />
              <rect x="27" y="48" width="18" height="18" fill={GRAY} />
            </svg>
          </RemoveButton>
        </ExportRow>
      </Sidebar>
    </Main>
    <TaskBar>
      <StartButton>
        <svg width="42" height="42" viewBox="0 0 42 42" fill="#fff">
          <path d="M0 6L19 3V20H0ZM21 3L42 0V20H21ZM0 22H19V39L0 36ZM21 22H42V42L21 39Z" />
        </svg>
      </StartButton>
      <SearchBox>
        <svg width="46" height="46" viewBox="0 0 46 46" fill="none" stroke="#000" strokeWidth="3">
          <circle cx="28" cy="17" r="15" />
          <path d="M18 29L3 46" />
        </svg>
        Type here to search
      </SearchBox>
      <TaskCell $w={128}>
        <svg width="42" height="40" viewBox="0 0 42 40" fill="none" stroke="#fff" strokeWidth="2">
          <path d="M0 1H28M0 39H28" />
          <rect x="2" y="9" width="24" height="22" />
          <path d="M39 1V11M39 29V39" />
          <circle cx="39" cy="20" r="2.5" fill="#fff" />
        </svg>
      </TaskCell>
      <TaskCell $w={122} $active $line>
        <PrusaMark w={46} h={60} ring />
      </TaskCell>
      <TaskCell $w={125} $line>
        <svg width="56" height="56" viewBox="0 0 56 56">
          <path d="M28 28L4 14A28 28 0 0 1 52 14Z" fill="#ea4335" />
          <path d="M28 28L4 14A28 28 0 0 0 28 56Z" fill="#34a853" />
          <path d="M28 28L52 14A28 28 0 0 1 28 56Z" fill="#fbbc05" />
          <circle cx="28" cy="28" r="13" fill="#fff" />
          <circle cx="28" cy="28" r="10" fill="#4285f4" />
        </svg>
      </TaskCell>
      <TaskCell $w={125} $line>
        <svg width="54" height="58" viewBox="0 0 54 58">
          <polygon points="27,0 54,13 54,45 27,58 0,45 0,13" fill="#8f0a14" />
          <polygon points="27,0 54,13 27,26 0,13" fill="#e8222a" />
          <text x="5" y="40" fontSize="22" fontWeight="700" fill="#fff" fontFamily="Liberation Sans, sans-serif">S</text>
          <text x="26" y="42" fontSize="20" fontWeight="700" fill="#fff" fontFamily="Liberation Sans, sans-serif">W</text>
          <text x="28" y="56" fontSize="11" fontWeight="700" fill="#fff" fontFamily="Liberation Sans, sans-serif">2021</text>
        </svg>
      </TaskCell>
      <Tray>
        <TrayCell>
          <TrayIcon w={34} h={40} box="0 0 34 40">
            <path d="M2 2H16V30M2 2V38H17M6 8H8M11 8H13" />
            <path d="M19 32L24 38L32 24" />
          </TrayIcon>
        </TrayCell>
        <TrayCell>
          <svg width="36" height="30" viewBox="0 0 36 30" fill="#b5b5b5">
            <ellipse cx="18" cy="15" rx="18" ry="15" />
            <path d="M9 16C9 8 17 8 19 15C21 21 28 20 27 14C26 9 19 9 16 17" fill="none" stroke="#606060" strokeWidth="2.5" />
          </svg>
        </TrayCell>
        <TrayCell>
          <svg width="40" height="40" viewBox="0 0 40 40">
            <polygon points="18,0 36,6 36,26 18,32 0,26 0,6" fill="#b8141e" />
            <polygon points="18,0 36,6 18,12 0,6" fill="#e8222a" />
            <text x="3" y="26" fontSize="15" fontWeight="700" fill="#fff" fontFamily="Liberation Sans, sans-serif">S</text>
            <text x="17" y="26" fontSize="14" fontWeight="700" fill="#fff" fontFamily="Liberation Sans, sans-serif">W</text>
            <path d="M20 30L25 37L37 20" fill="none" stroke="#2bd13c" strokeWidth="4" />
          </svg>
        </TrayCell>
        <TrayCell>
          <svg width="42" height="36" viewBox="0 0 42 36" fill="#9a9fa3">
            <ellipse cx="22" cy="12" rx="13" ry="12" />
            <ellipse cx="10" cy="24" rx="10" ry="10" />
            <rect x="8" y="18" width="34" height="16" rx="8" />
            <path d="M7 0L37 36" stroke="#fff" strokeWidth="3" />
          </svg>
        </TrayCell>
        <TrayCell>
          <svg width="40" height="42" viewBox="0 0 40 42">
            <path d="M18 1L35 6V22Q35 34 18 41Q1 34 1 22V6Z" fill="#fff" stroke="#111" strokeWidth="1" />
            <path d="M18 3V39M2 20H34" stroke="#111" strokeWidth="2" />
            <polygon points="28,18 40,42 16,42" fill="#f6b90f" />
            <rect x="27" y="26" width="2.5" height="9" fill="#111" />
            <rect x="27" y="37" width="2.5" height="3" fill="#111" />
          </svg>
        </TrayCell>
        <TrayCell>
          <svg width="28" height="40" viewBox="0 0 28 40" fill="none">
            <ellipse cx="14" cy="20" rx="14" ry="20" fill="#0c82f5" />
            <path d="M7 12L21 27L14 34V6L21 13L7 28" stroke="#fff" strokeWidth="2" />
          </svg>
        </TrayCell>
        <TrayCell>
          <svg width="40" height="42" viewBox="0 0 40 42" fill="none" stroke="#6c7276" strokeWidth="5">
            <path d="M16 4A18 19 0 1 1 5 12" />
            <path d="M14 3V24A7 7 0 1 0 25 16" />
          </svg>
        </TrayCell>
        <TrayCell>
          <TrayIcon w={42} h={32} box="0 0 42 32">
            <path d="M14 5H37V27H14M37 11H41V21H37" />
            <rect x="20" y="12" width="6" height="10" fill="#fff" />
            <path d="M4 1V7M10 1V7M1 7H13V14Q13 19 7 19Q1 19 1 14ZM7 19V31H18" />
          </TrayIcon>
        </TrayCell>
        <TrayCell>
          <TrayIcon w={38} h={32} box="0 0 38 32">
            <path d="M1 10H7L13 2V30L7 22H1Z" />
            <path d="M23 10L36 24M36 10L23 24" />
          </TrayIcon>
        </TrayCell>
        <Clock>
          <div>9:44 AM</div>
          <div>1/10/2023</div>
        </Clock>
        <NotifyCell>
          <TrayIcon w={40} h={40} box="0 0 40 40">
            <path d="M1 2H39V32H27L20 39L14 32H1Z" />
          </TrayIcon>
        </NotifyCell>
        <ShowDesktop />
      </Tray>
    </TaskBar>
  </Page>
);

export default App;
